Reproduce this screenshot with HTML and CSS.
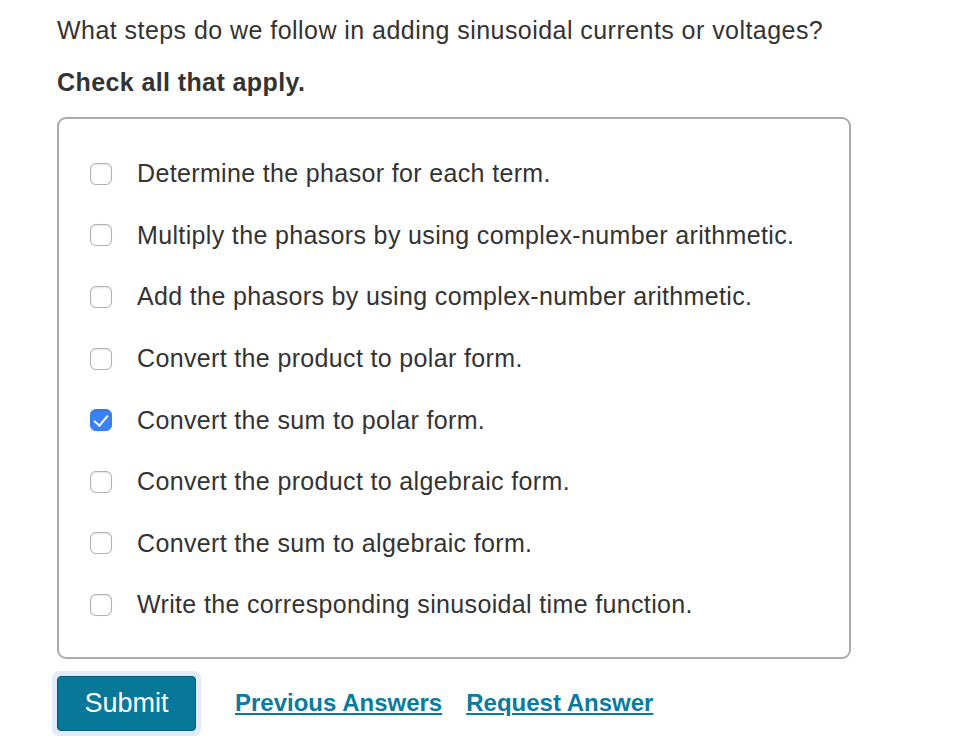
FILE: index.html
```html
<!DOCTYPE html>
<html lang="en">
<head>
    <meta charset="UTF-8">
    <meta name="viewport" content="width=device-width, initial-scale=1.0">
    <title>Check all that apply</title>
    <link rel="stylesheet" href="styles.css">
</head>
<body>

    <div class="question">
        <p class="prompt">What steps do we follow in adding sinusoidal currents or voltages?</p>
        <p class="instruction">Check all that apply.</p>

        <div class="choices">
            <label class="choice"><input type="checkbox"><span>Determine the phasor for each term.</span></label>
            <label class="choice"><input type="checkbox"><span>Multiply the phasors by using complex-number arithmetic.</span></label>
            <label class="choice"><input type="checkbox"><span>Add the phasors by using complex-number arithmetic.</span></label>
            <label class="choice"><input type="checkbox"><span>Convert the product to polar form.</span></label>
            <label class="choice"><input type="checkbox" checked><span>Convert the sum to polar form.</span></label>
            <label class="choice"><input type="checkbox"><span>Convert the product to algebraic form.</span></label>
            <label class="choice"><input type="checkbox"><span>Convert the sum to algebraic form.</span></label>
            <label class="choice"><input type="checkbox"><span>Write the corresponding sinusoidal time function.</span></label>
        </div>

        <div class="actions">
            <div class="submit_ring"><button class="submit">Submit</button></div>
            <a href="#" class="action_link">Previous Answers</a>
            <a href="#" class="action_link">Request Answer</a>
        </div>
    </div>

</body>
</html>
```

FILE: styles.css
```css
body {
    font-family: "Liberation Sans", Arial, Helvetica, sans-serif;
    color: #333;
    background-color: #fff;
    margin: 0;
}
.question {
    padding: 15px 0 0 57px;
    width: 794px;
}
.prompt {
    font-size: 25px;
    letter-spacing: 0.45px;
    line-height: 30px;
    margin: 0;
}
.instruction {
    font-size: 25px;
    font-weight: bold;
    letter-spacing: 0.4px;
    line-height: 30px;
    margin: 22px 0 0 0;
}
.choices {
    margin-top: 20px;
    border: 2px solid #acacac;
    border-radius: 9px;
    padding: 24px 0 21px 0;
}
.choice {
    display: flex;
    align-items: center;
    height: 61.6px;
    font-size: 25px;
    letter-spacing: 0.35px;
    cursor: pointer;
}
.choice input {
    appearance: none;
    -webkit-appearance: none;
    width: 22px;
    height: 22px;
    margin: 0 25px 0 31px;
    border: 1px solid #b3b3b3;
    border-radius: 6px;
    background-color: #fff;
    box-shadow: inset 0 1px 2px rgba(0, 0, 0, 0.1), 0 0 1px rgba(0, 0, 0, 0.15);
    position: relative;
    flex-shrink: 0;
}
.choice input:checked {
    background-color: #3b82f6;
    border-color: #3a7ff0;
}
.choice input:checked::after {
    content: "";
    position: absolute;
    left: 6px;
    top: 2px;
    width: 6px;
    height: 12px;
    border: solid #fff;
    border-width: 0 2.5px 2.5px 0;
    transform: rotate(40deg);
}
.actions {
    display: flex;
    align-items: center;
    margin-top: 12px;
    margin-left: -5px;
}
.submit_ring {
    background-color: #e1ebfb;
    border-radius: 7px;
    padding: 5px;
}
.submit {
    display: block;
    width: 139px;
    height: 55px;
    font-family: inherit;
    font-size: 27px;
    color: #fff;
    background-color: #08789a;
    border: 1px solid #075a72;
    border-radius: 4px;
    cursor: pointer;
}
.action_link {
    font-size: 24px;
    font-weight: bold;
    color: #0a7a9e;
    text-decoration: underline;
    margin-left: 34px;
}
.action_link + .action_link {
    margin-left: 24px;
}
```
